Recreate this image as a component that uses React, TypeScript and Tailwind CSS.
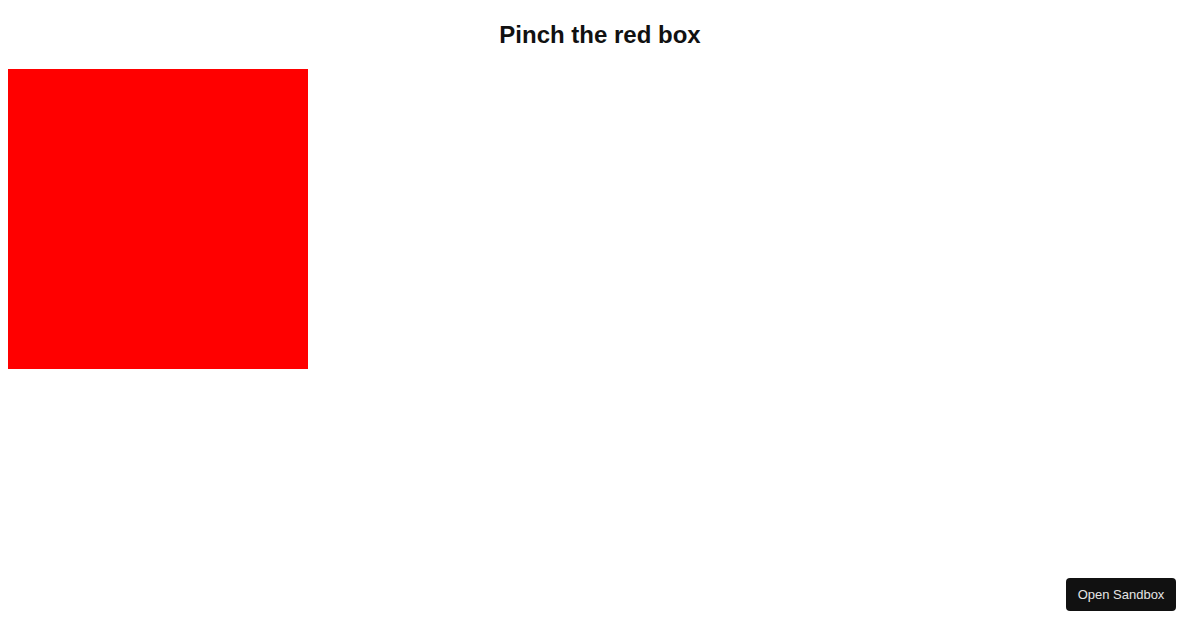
export default function App() {
  return (
    <div className="relative h-[630px] w-full bg-white px-2" style={{ fontFamily: '"Liberation Sans", Arial, sans-serif' }}>
      <h1 className="pt-[21px] pb-[20px] text-center text-[24px] leading-[28px] font-bold text-[#111]">
        Pinch the red box
      </h1>
      <div className="h-[300px] w-[300px] bg-[#ff0000]" />

      <button className="absolute right-6 bottom-[19px] h-[33px] w-[110px] rounded bg-[#111111] text-[13px] text-[#e5e5e5]">
        Open Sandbox
      </button>
    </div>
  );
}
